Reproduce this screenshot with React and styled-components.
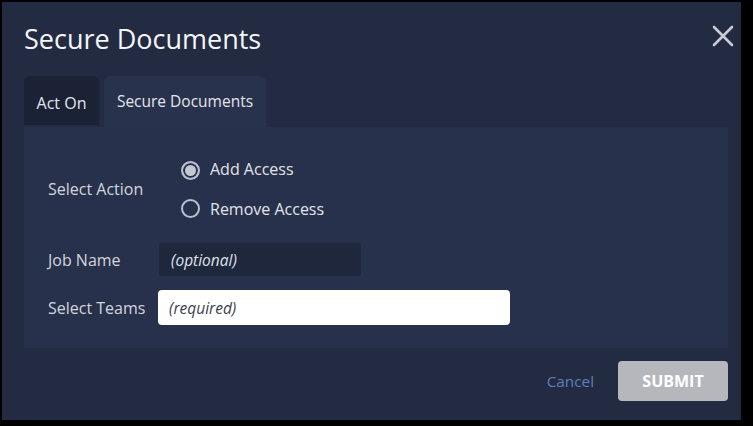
import styled, { createGlobalStyle } from 'styled-components';
import { useState } from 'react';

const GlobalStyle = createGlobalStyle`
  html, body {
    margin: 0;
    padding: 0;
    background: #000;
    font-family: "Open Sans", Lato, sans-serif;
  }
  * { box-sizing: border-box; }
`;

function App() {
  const [action, setAction] = useState("add");

  return (
    <>
      <GlobalStyle />
      <Dialog>
        <Header>
          <Title>Secure Documents</Title>
          <CloseButton aria-label="close">
            <svg width="22" height="22" viewBox="0 0 22 22">
              <path d="M2 2 L20 20 M20 2 L2 20" stroke="#c9ccd6" strokeWidth="2.6" strokeLinecap="round" />
            </svg>
          </CloseButton>
        </Header>
        <Tabs>
          <Tab $active>Act On</Tab>
          <Tab>Secure Documents</Tab>
        </Tabs>
        <Panel>
          <Row>
            <Label>Select Action</Label>
            <Radios>
              <RadioItem onClick={() => setAction("add")}>
                <Radio $checked={action === "add"} />
                Add Access
              </RadioItem>
              <RadioItem onClick={() => setAction("remove")}>
                <Radio $checked={action === "remove"} />
                Remove Access
              </RadioItem>
            </Radios>
          </Row>
          <FieldRow $gap={23}>
            <Label>Job Name</Label>
            <DarkInput placeholder="(optional)" />
          </FieldRow>
          <FieldRow $gap={14}>
            <Label>Select Teams</Label>
            <LightInput placeholder="(required)" />
          </FieldRow>
        </Panel>
        <Footer>
          <Cancel>Cancel</Cancel>
          <Submit>SUBMIT</Submit>
        </Footer>
      </Dialog>
    </>
  );
}
export default App;

const Dialog = styled.div`
  width: 739px;
  height: 418px;
  margin: 2px 0 0 2px;
  background: #232b42;
  display: flex;
  flex-direction: column;
  padding: 0 13px 0 22px;
`;

const Header = styled.div`
  height: 74px;
  display: flex;
  align-items: center;
  justify-content: space-between;
  padding-bottom: 2px;
`;

const Title = styled.h1`
  margin: 0;
  font-size: 27px;
  font-weight: 400;
  color: #f4f5f8;
`;

const CloseButton = styled.button`
  background: none;
  border: none;
  padding: 0;
  margin-right: -6px;
  margin-top: -4px;
  display: flex;
  cursor: pointer;
`;

const Tabs = styled.div`
  display: flex;
  gap: 5px;
  height: 51px;
`;

const Tab = styled.div`
  display: flex;
  align-items: center;
  justify-content: center;
  width: ${p => (p.$active ? "75px" : "162px")};
  padding-top: ${p => (p.$active ? "4px" : "0")};
  padding-bottom: ${p => (p.$active ? "0" : "2px")};
  height: ${p => (p.$active ? "49px" : "51px")};
  border-radius: 6px 6px 0 0;
  background: ${p => (p.$active ? "#1b2235" : "#29324d")};
  color: #e3e6ec;
  font-size: ${p => (p.$active ? "16px" : "15.5px")};
`;

const Panel = styled.div`
  height: 221px;
  background: #28314b;
  padding: 30px 24px 0 24px;
  display: flex;
  flex-direction: column;
`;

const Row = styled.div`
  display: flex;
  align-items: center;
`;

const Label = styled.div`
  width: 110px;
  color: #d3d6de;
  font-size: 16px;
`;

const Radios = styled.div`
  display: flex;
  flex-direction: column;
  gap: 17px;
  margin-left: 23px;
`;

const RadioItem = styled.label`
  display: flex;
  align-items: center;
  gap: 10px;
  color: #e1e4ea;
  font-size: 16px;
  cursor: pointer;
  height: 23px;
`;

const Radio = styled.span`
  width: 19px;
  height: 19px;
  border-radius: 50%;
  border: 2px solid #b9bfcc;
  background: ${p => (p.$checked ? "#c4c8d2" : "transparent")};
  box-shadow: ${p => (p.$checked ? "inset 0 0 0 2px #28314b" : "none")};
  margin-top: ${p => (p.$checked ? "4px" : "0")};
`;

const FieldRow = styled.div`
  display: flex;
  align-items: center;
  margin-top: ${p => p.$gap}px;
`;

const DarkInput = styled.input`
  width: 202px;
  height: 33px;
  margin-left: 1px;
  border: none;
  border-radius: 3px;
  background: #1f273d;
  color: #e0e3ea;
  padding: 0 12px;
  font-family: inherit;
  font-size: 15.5px;
  outline: none;
  &::placeholder { color: #dfe2e9; font-style: italic; }
`;

const LightInput = styled.input`
  width: 352px;
  height: 35px;
  border: none;
  border-radius: 4px;
  background: #ffffff;
  color: #333;
  padding: 0 11px;
  font-family: inherit;
  font-size: 15.5px;
  outline: none;
  &::placeholder { color: #3c4150; font-style: italic; }
`;

const Footer = styled.div`
  display: flex;
  justify-content: flex-end;
  align-items: center;
  gap: 24px;
  padding-top: 13px;
`;

const Cancel = styled.button`
  background: none;
  border: none;
  color: #5c80b8;
  font-family: inherit;
  font-size: 15.3px;
  padding: 0;
  cursor: pointer;
`;

const Submit = styled.button`
  width: 110px;
  height: 40px;
  border: none;
  border-radius: 4px;
  background: #b6b7bc;
  color: #ffffff;
  font-family: inherit;
  font-weight: 700;
  font-size: 16px;
  cursor: pointer;
`;
